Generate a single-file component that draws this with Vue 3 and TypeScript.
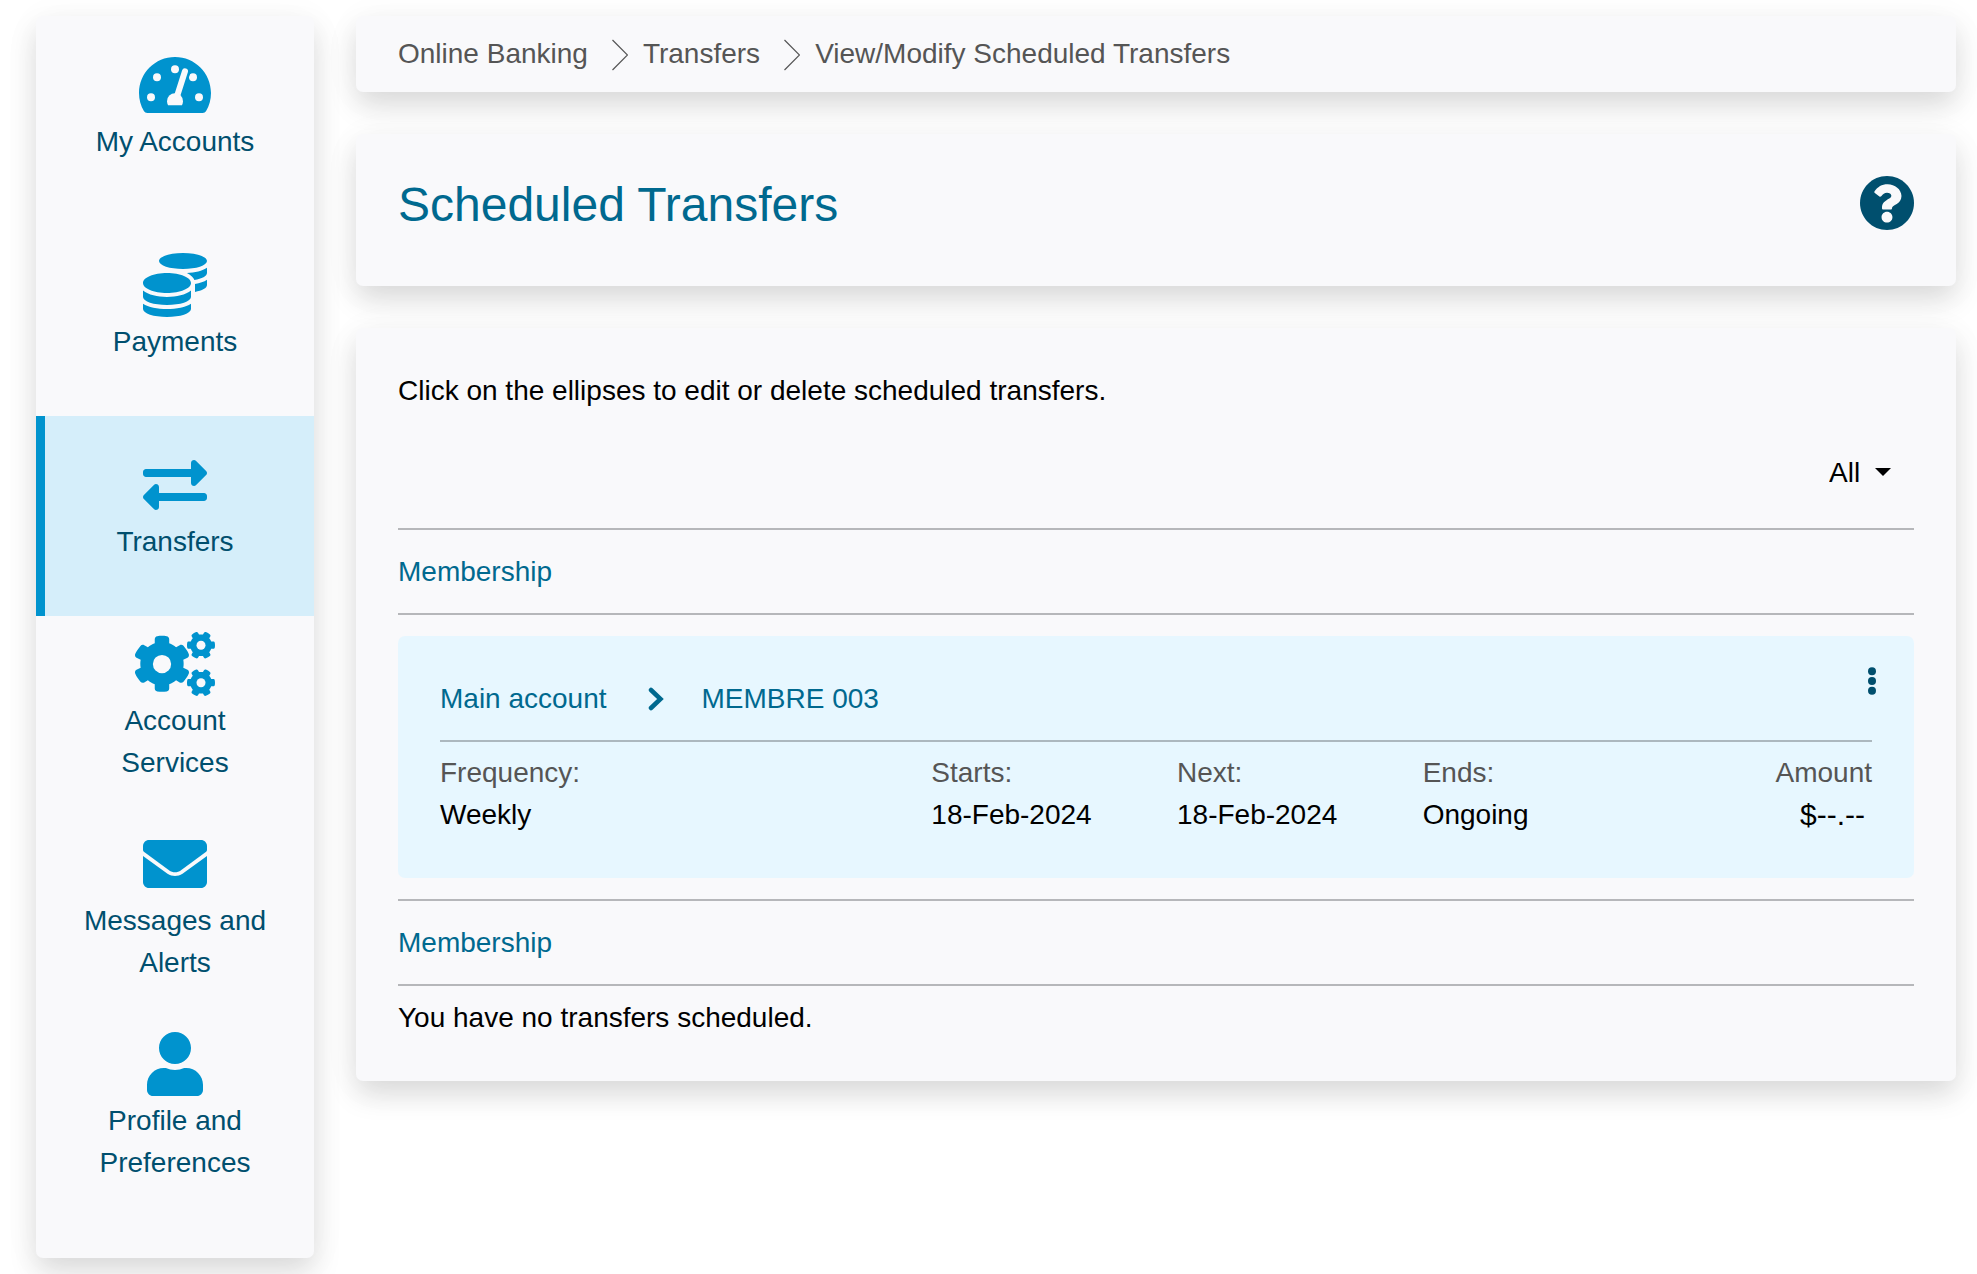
<script setup lang="ts">
import { ref } from 'vue'

interface NavItem {
  id: string
  label: string
  active?: boolean
}

interface Detail {
  term: string
  value: string
  end?: boolean
}

const navItems: NavItem[] = [
  { id: 'accounts', label: 'My Accounts' },
  { id: 'payments', label: 'Payments' },
  { id: 'transfers', label: 'Transfers', active: true },
  { id: 'services', label: 'Account Services' },
  { id: 'messages', label: 'Messages and Alerts' },
  { id: 'profile', label: 'Profile and Preferences' },
]

const crumbs: string[] = ['Online Banking', 'Transfers', 'View/Modify Scheduled Transfers']

const details: Detail[] = [
  { term: 'Frequency:', value: 'Weekly' },
  { term: 'Starts:', value: '18-Feb-2024' },
  { term: 'Next:', value: '18-Feb-2024' },
  { term: 'Ends:', value: 'Ongoing' },
  { term: 'Amount', value: '$--.--', end: true },
]

const smallGear =
  'M512.1 191l-8.2 14.3c-3 5.3-9.4 7.5-15.1 5.4-11.8-4.4-22.6-10.7-32.1-18.6-4.6-3.8-5.8-10.5-2.8-15.7l8.2-14.3c-6.9-8-12.3-17.3-15.9-27.4h-16.5c-6 0-11.2-4.3-12.2-10.3-2-12-2.1-24.6 0-37.1 1-6 6.2-10.4 12.2-10.4h16.5c3.6-10.1 9-19.4 15.9-27.4l-8.2-14.3c-3-5.2-1.9-11.9 2.8-15.7 9.5-7.9 20.4-14.2 32.1-18.6 5.7-2.1 12.1.1 15.1 5.4l8.2 14.3c10.5-1.9 21.2-1.9 31.7 0L552 6.3c3-5.3 9.4-7.5 15.1-5.4 11.8 4.4 22.6 10.7 32.1 18.6 4.6 3.8 5.8 10.5 2.8 15.7l-8.2 14.3c6.9 8 12.3 17.3 15.9 27.4h16.5c6 0 11.2 4.3 12.2 10.3 2 12 2.1 24.6 0 37.1-1 6-6.2 10.4-12.2 10.4h-16.5c-3.6 10.1-9 19.4-15.9 27.4l8.2 14.3c3 5.2 1.9 11.9-2.8 15.7-9.5 7.9-20.4 14.2-32.1 18.6-5.7 2.1-12.1-.1-15.1-5.4l-8.2-14.3c-10.4 1.9-21.2 1.9-31.7 0z'

const filter = ref<string>('All')
</script>

<template>
  <div class="page">
    <nav class="panel sidebar" aria-label="Main">
      <a
        v-for="item in navItems"
        :key="item.id"
        href="#"
        class="nav-item"
        :class="{ active: item.active }"
        :aria-current="item.active ? 'page' : undefined"
      >
        <svg v-if="item.id === 'accounts'" class="nav-icon" viewBox="0 0 576 512" aria-hidden="true">
          <path d="M288 32C128.9 32 0 160.900 0 320c0 52.800 14.200 102.300 39.100 144.800 5.600 9.600 16.300 15.200 27.400 15.200h443c11.100 0 21.800-5.600 27.400-15.200C561.800 422.300 576 372.800 576 320c0-159.100-128.900-288-288-288z" />
          <g class="cut">
            <circle cx="288" cy="130" r="32" />
            <circle cx="144" cy="194" r="32" />
            <circle cx="432" cy="194" r="32" />
            <circle cx="96" cy="354" r="32" />
            <circle cx="480" cy="354" r="32" />
          </g>
          <path d="M368 146L308 334" fill="none" stroke="currentColor" stroke-width="88" stroke-linecap="round" />
          <path class="cut-line" d="M368 146L308 334" fill="none" stroke-width="48" stroke-linecap="round" />
          <path class="cut" d="M232 418c-5-10-8-20-8-32a64 64 0 0 1 128 0c0 12-3 22-8 32z" />
        </svg>

        <svg v-else-if="item.id === 'payments'" class="nav-icon" viewBox="0 0 512 512" aria-hidden="true">
          <path d="M0 405.300V448c0 35.300 86 64 192 64s192-28.700 192-64v-42.700C342.700 434.400 267.200 448 192 448S41.300 434.400 0 405.300zM320 128c106 0 192-28.700 192-64S426 0 320 0 128 28.700 128 64s86 64 192 64zM0 300.400V352c0 35.300 86 64 192 64s192-28.700 192-64v-51.600c-41.300 34-116.900 51.600-192 51.600S41.300 334.400 0 300.400zm416 11c57.300-11.100 96-31.700 96-55.400v-42.700c-23.200 16.400-57.300 27.600-96 34.500v63.600zM192 160C86 160 0 195.800 0 240s86 80 192 80 192-35.800 192-80-86-80-192-80zm219.300 56.300c60-10.800 100.700-32 100.700-56.300v-42.700c-35.500 25.100-96.500 38.600-160.700 41.800 29.500 14.300 51.200 33.500 60 57.200z" />
        </svg>

        <svg v-else-if="item.id === 'transfers'" class="nav-icon" viewBox="0 0 512 512" aria-hidden="true">
          <path d="M0 168v-16c0-13.255 10.745-24 24-24h360V80c0-21.367 25.899-32.042 40.971-16.971l80 80c9.372 9.373 9.372 24.569 0 33.941l-80 80C409.956 271.982 384 261.456 384 240v-48H24c-13.255 0-24-10.745-24-24zm488 152H128v-48c0-21.314-25.862-32.080-40.971-16.971l-80 80c-9.372 9.373-9.372 24.569 0 33.941l80 80C102.057 463.997 128 453.437 128 432v-48h360c13.255 0 24-10.745 24-24v-16c0-13.255-10.745-24-24-24z" />
        </svg>

        <svg v-else-if="item.id === 'services'" class="nav-icon" viewBox="0 0 640 512" aria-hidden="true">
          <path :d="smallGear" />
          <path :d="smallGear" transform="translate(0 300)" />
          <path d="M386.300 286.100l33.700 16.800c10.100 5.800 14.500 18.100 10.500 29.100-8.900 24.200-26.400 46.400-42.600 65.800-7.400 8.900-20.200 11.100-30.300 5.300l-29.100-16.800c-16 13.700-34.600 24.600-54.900 31.700v33.600c0 11.600-8.300 21.600-19.700 23.600-24.600 4.200-50.400 4.400-75.900 0-11.500-2-20-11.900-20-23.600V418c-20.300-7.200-38.900-18-54.900-31.700L74 403c-10 5.800-22.900 3.600-30.300-5.300-16.200-19.400-33.300-41.600-42.200-65.700-4-10.900.4-23.200 10.500-29.100l33.300-16.800c-3.900-20.900-3.900-42.400 0-63.400L12 205.800c-10.100-5.800-14.600-18.100-10.500-29 8.900-24.200 26-46.400 42.200-65.800 7.400-8.900 20.200-11.100 30.300-5.300l29.100 16.800c16-13.700 34.600-24.600 54.900-31.700V57.100c0-11.500 8.200-21.500 19.600-23.500 24.600-4.200 50.500-4.400 76-.1 11.500 2 20 11.900 20 23.600v33.600c20.300 7.200 38.900 18 54.900 31.700l29.100-16.800c10-5.800 22.900-3.600 30.300 5.300 16.200 19.400 33.200 41.600 42.100 65.800 4 10.900.1 23.200-10 29.100l-33.700 16.800c3.900 21 3.900 42.500 0 63.500z" />
          <g class="cut">
            <circle cx="216" cy="256" r="73" />
            <circle cx="528" cy="106" r="36" />
            <circle cx="528" cy="406" r="36" />
          </g>
        </svg>

        <svg v-else-if="item.id === 'messages'" class="nav-icon" viewBox="0 0 512 512" aria-hidden="true">
          <path d="M48 64h416c26.500 0 48 21.500 48 48v32c0 5-3 10-7 13L304 306c-30 22-66 22-96 0L7 157c-4-3-7-8-7-13v-32c0-26.500 21.500-48 48-48z" />
          <path d="M0 192L196 334c38 24 82 24 120 0L512 192v208c0 26.500-21.500 48-48 48H48c-26.500 0-48-21.500-48-48z" />
        </svg>

        <svg v-else class="nav-icon" viewBox="0 0 448 512" aria-hidden="true">
          <path d="M224 256c70.700 0 128-57.300 128-128S294.700 0 224 0 96 57.300 96 128s57.300 128 128 128zm89.600 32h-16.700c-22.200 10.200-46.900 16-72.900 16s-50.600-5.800-72.900-16h-16.700C60.200 288 0 348.200 0 422.400V464c0 26.500 21.500 48 48 48h352c26.500 0 48-21.500 48-48v-41.600c0-74.200-60.200-134.400-134.400-134.400z" />
        </svg>
        <span>{{ item.label }}</span>
      </a>
    </nav>

    <main class="content">
      <nav class="panel crumbs" aria-label="Breadcrumb">
        <template v-for="(crumb, i) in crumbs" :key="crumb">
          <svg v-if="i > 0" class="crumb-sep" viewBox="0 0 16 34" aria-hidden="true">
            <path d="M.5 3L15.500 18L.5 33" fill="none" stroke="currentColor" stroke-width="1.200" />
          </svg>
          <a v-if="i < crumbs.length - 1" href="#">{{ crumb }}</a>
          <span v-else aria-current="page">{{ crumb }}</span>
        </template>
      </nav>

      <header class="panel title-bar">
        <h1>Scheduled Transfers</h1>
        <button type="button" class="help" aria-label="Help">
          <svg viewBox="8 8 496 496" aria-hidden="true">
            <path d="M504 256c0 136.997-111.043 248-248 248S8 392.997 8 256C8 119.083 119.043 8 256 8s248 111.083 248 248z" />
            <path class="cut" d="M262.655 84c-56 0-93 24-121 65-3.536 5.286-2.353 12.415 2.715 16.258l42 32c5.205 3.947 12.621 3.008 16.665-2.122 17.864-22.658 28-34 53-34 20.429 0 40 11 40 29 0 14.976-12.363 21-32.534 32C241 239 210 256 210 298v6c0 6.627 5.373 12 12 12h68c6.627 0 12-5.373 12-12v-1.333c0-28.462 87-32 87-110 0-62-62-108.667-126.345-108.667zM256 336c-28 0-50 22-50 50s22 50 50 50 50-22 50-50-22-50-50-50z" />
          </svg>
        </button>
      </header>

      <section class="panel transfers">
        <p>Click on the ellipses to edit or delete scheduled transfers.</p>

        <div class="filter-row">
          <div class="filter">
            <select v-model="filter" aria-label="Filter">
              <option>All</option>
            </select>
            <svg viewBox="0 0 16 8" aria-hidden="true"><path d="M0 0h16L8 8z" /></svg>
          </div>
        </div>

        <h2>Membership</h2>

        <article class="transfer">
          <button type="button" class="menu" aria-label="Options">
            <svg viewBox="0 0 8 28" aria-hidden="true">
              <circle cx="4" cy="4.300" r="4" />
              <circle cx="4" cy="14" r="4" />
              <circle cx="4" cy="23.700" r="4" />
            </svg>
          </button>
          <h3>
            <span>Main account</span>
            <svg viewBox="0 0 16 24" aria-hidden="true">
              <path d="M3 3L12.500 12L3 21" fill="none" stroke="currentColor" stroke-width="4.500" stroke-linecap="round" />
            </svg>
            <span>MEMBRE 003</span>
          </h3>
          <dl>
            <div v-for="d in details" :key="d.term" :class="{ end: d.end }">
              <dt>{{ d.term }}</dt>
              <dd>{{ d.value }}</dd>
            </div>
          </dl>
        </article>

        <h2>Membership</h2>
        <p class="empty">You have no transfers scheduled.</p>
      </section>
    </main>
  </div>
</template>

<style>
body {
  margin: 0;
  background: #fff;
}
</style>

<style scoped>
.page {
  display: grid;
  grid-template-columns: 278px minmax(0, 1fr);
  gap: 42px;
  align-items: start;
  padding: 16px 21px 16px 36px;
  font-family: "Liberation Sans", Arial, sans-serif;
  font-size: 28px;
  line-height: 42px;
  color: #000;
}

.panel {
  background: #f9f9fb;
  border-radius: 7px;
  box-shadow:
    0 14px 28px rgba(0, 0, 0, 0.13),
    0 4px 42px rgba(0, 0, 0, 0.04);
}

a {
  color: inherit;
  text-decoration: none;
}

h1,
h2,
h3,
p,
dl,
dd {
  margin: 0;
  font-weight: 400;
}

button {
  padding: 0;
  border: 0;
  background: none;
  color: #004f6e;
  cursor: pointer;
}

svg {
  display: block;
  fill: currentColor;
}

.sidebar {
  padding-bottom: 42px;
}

.nav-item {
  box-sizing: border-box;
  display: flex;
  flex-direction: column;
  align-items: center;
  justify-content: center;
  gap: 4px;
  height: 200px;
  padding: 0 26px 16px;
  border: solid transparent;
  border-width: 0 9px;
  color: #004f6e;
  text-align: center;
}

.nav-item.active {
  background: #d5eefa;
  border-left-color: #0093ce;
}

.nav-icon {
  height: 64px;
  color: #0093ce;
}

.cut {
  fill: #f9f9fb;
}

.cut-line {
  stroke: #f9f9fb;
}

.content {
  display: flex;
  flex-direction: column;
  gap: 42px;
}

.crumbs {
  display: flex;
  align-items: center;
  padding: 17px 42px;
  color: #555;
}

.crumb-sep {
  width: 16px;
  height: 34px;
  margin: 0 15px 0 24px;
}

.title-bar {
  display: flex;
  justify-content: space-between;
  align-items: flex-start;
  padding: 42px 42px 52px;
}

h1 {
  font-size: 48px;
  line-height: 58px;
  color: #00698f;
}

.help svg {
  width: 54px;
  height: 54px;
}

.transfers {
  padding: 42px;
}

.filter-row {
  display: flex;
  justify-content: flex-end;
  padding: 40px 0 34px;
}

.filter {
  display: grid;
  align-items: center;
}

.filter select {
  grid-area: 1 / 1;
  appearance: none;
  width: 85px;
  height: 42px;
  padding: 0;
  border: 0;
  background: none;
  font: inherit;
  color: inherit;
}

.filter svg {
  grid-area: 1 / 1;
  justify-self: end;
  width: 16px;
  height: 8px;
  margin: 0 23px 3px 0;
  pointer-events: none;
}

h2 {
  padding: 21px 0 20px;
  border: solid #b6b7ba;
  border-width: 2px 0;
  font-size: 28px;
  line-height: 42px;
  color: #00698f;
}

.transfer {
  position: relative;
  margin: 21px 0;
  padding: 42px;
  background: #e7f7ff;
  border-radius: 7px;
}

.menu {
  position: absolute;
  top: 24px;
  right: 21px;
  display: grid;
  place-items: center;
  width: 42px;
  height: 42px;
}

.menu svg {
  width: 8px;
  height: 28px;
}

h3 {
  display: flex;
  align-items: center;
  padding-bottom: 20px;
  border-bottom: 2px solid #acb8bf;
  font-size: 28px;
  line-height: 42px;
  color: #00698f;
}

h3 svg {
  width: 16px;
  height: 24px;
  margin: 0 38px 0 41px;
}

dl {
  display: grid;
  grid-template-columns: repeat(6, minmax(0, 1fr));
  gap: 42px;
  padding-top: 10px;
}

dl div:first-child {
  grid-column: span 2;
}

dt {
  color: #555;
}

.end {
  text-align: right;
}

.end dd {
  padding-right: 7px;
  font-size: 30px;
}

.empty {
  padding-top: 11px;
}
</style>
